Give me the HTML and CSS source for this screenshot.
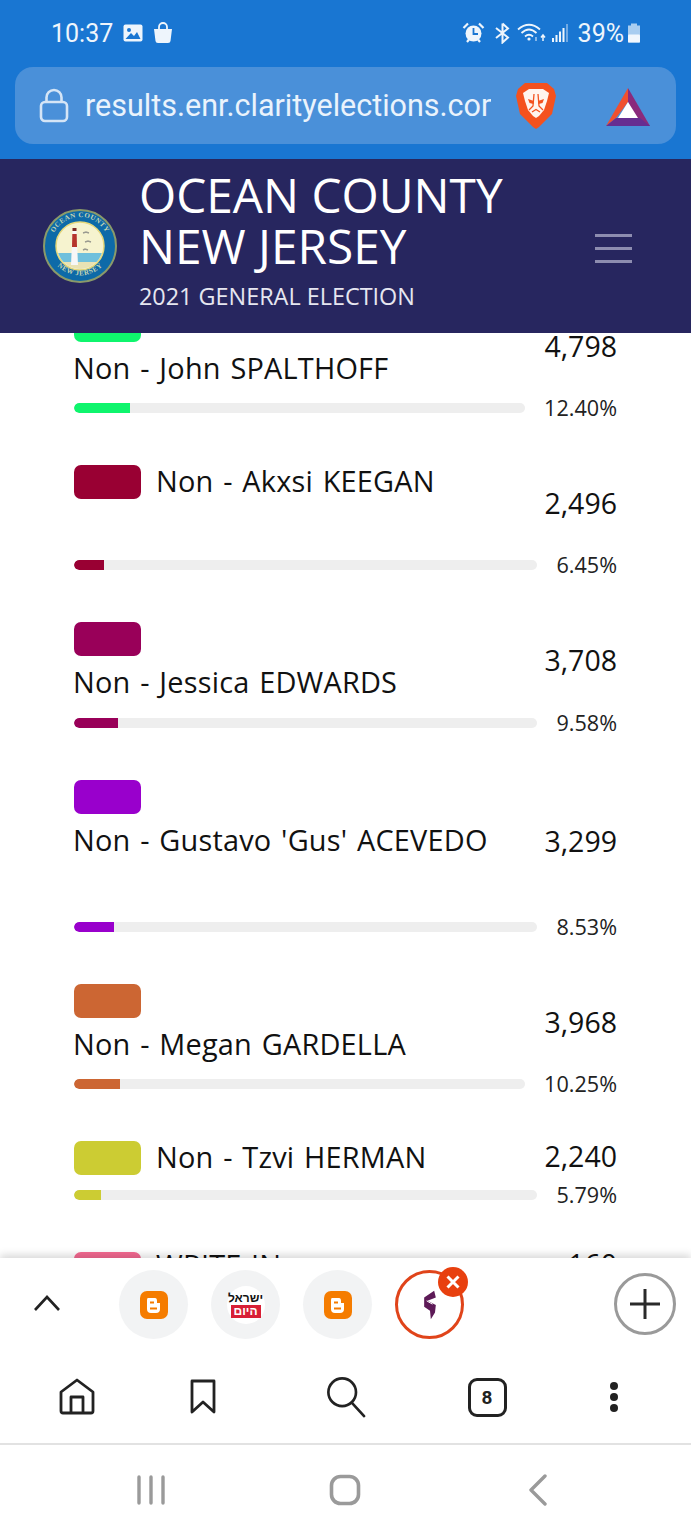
FILE: index.html
```html
<!DOCTYPE html>
<html lang="en">
<head>
<meta charset="utf-8">
<title>Ocean County New Jersey - 2021 General Election</title>
<link rel="stylesheet" href="styles.css">
</head>
<body>
<div class="phone">
  <div class="chrome">
    <div class="status">
      <span class="time">10:37</span>
      <svg class="st-icon" width="20" height="18" viewBox="0 0 20 18"><rect x="0.5" y="0.5" width="19" height="17" rx="2" fill="#eef5fc"/><circle cx="6" cy="6" r="2" fill="#1976d2"/><path d="M2.500 15 L8 9 L11 12 L14 8 L17.500 15 Z" fill="#1976d2"/></svg>
      <svg class="st-icon bag" width="20" height="22" viewBox="0 0 20 22"><path d="M6 8 V5 a4 4 0 0 1 8 0 V8" fill="none" stroke="#eef5fc" stroke-width="1.800"/><path d="M1 7 H19 L17.500 19 Q17.300 21 15 21 H5 Q2.700 21 2.500 19 Z" fill="#eef5fc"/></svg>
      <span class="st-right">
        <svg width="23" height="22" viewBox="0 0 23 22"><path d="M1.500 6 L6 1.500 M21.500 6 L17 1.500 M5 20 L7 17.500 M18 20 L16 17.500" stroke="#eef5fc" stroke-width="2.200" fill="none"/><circle cx="11.500" cy="11.500" r="8" fill="#eef5fc"/><path d="M11.500 6 V12 H16" stroke="#1976d2" stroke-width="1.800" fill="none"/></svg>
        <svg class="bt" width="19" height="22" viewBox="0 0 19 22"><path d="M9.500 1.500 V20.500 L15 15.500 L3 6 M9.500 1.500 L15 6.500 L3 16" stroke="#eef5fc" stroke-width="2" fill="none"/></svg>
        <svg class="wifi" width="31" height="22" viewBox="0 0 31 22"><path d="M1 7.500 Q12 -2 23 7.500 M4.500 11 Q12 4 19.500 11 M8 14.500 Q12 11 16 14.500" stroke="#eef5fc" stroke-width="1.800" fill="none"/><circle cx="12" cy="17" r="1.600" fill="#eef5fc"/><path d="M26 19 V13.500 M24 15.500 L26 13 L28 15.500" stroke="#eef5fc" stroke-width="1.500" fill="none"/><path d="M19 15 V19" stroke="#a9cdf0" stroke-width="1.500"/></svg>
        <svg class="sig" width="16" height="20" viewBox="0 0 16 20"><path d="M1 19 V15 M4.500 19 V12 M8 19 V8.500 M11.500 19 V5" stroke="#eef5fc" stroke-width="2"/><path d="M15 19 V1" stroke="#8fbdea" stroke-width="1.500"/></svg>
        <span class="pct-batt">39%</span>
        <svg class="batt" width="14" height="20" viewBox="0 0 14 20"><path d="M4 0.500 H10 V2.500 H13 V19.500 H1 V2.500 H4 Z" fill="#a9cdf0"/><rect x="1" y="11.500" width="12" height="8" rx="1" fill="#f2f7fd"/></svg>
      </span>
    </div>
    <div class="urlbar">
      <svg class="lock" width="30" height="35" viewBox="0 0 30 35"><rect x="2" y="14" width="26" height="19" rx="4" fill="none" stroke="#d5e5f6" stroke-width="2.600"/><path d="M7.500 14 V9.500 a7.500 7.500 0 0 1 15 0 V14" fill="none" stroke="#d5e5f6" stroke-width="2.600"/></svg>
      <span class="url">results.enr.clarityelections.com</span>
      <svg class="brave" width="42" height="48" viewBox="0 0 42 48">
        <path d="M10 1 H32 L39 7 L41 14 L37 32 L24 45 L21 47 L18 45 L5 32 L1 14 L3 7 Z" fill="#f4511e"/>
        <path d="M8 11 L14 7 H28 L34 11 L32 19 L29 28 L24 34 L21 36 L18 34 L13 28 L10 19 Z" fill="#fff4ee"/>
        <path d="M13 17 L19 19 L18.500 22 L14.500 21 Z M29 17 L23 19 L23.500 22 L27.500 21 Z" fill="#f4511e"/>
        <path d="M19 12 L18 24 L14 28 M23 12 L24 24 L28 28 M17 30 L21 27.500 L25 30" fill="none" stroke="#f4511e" stroke-width="1.300"/>
      </svg>
      <svg class="bat" width="44" height="38" viewBox="0 0 44 38"><path d="M22 0 L44 38 H34 L22 14 Z" fill="#8a2a7c"/><path d="M22 0 L0 38 L10 30 L22 14 Z" fill="#f0502f"/><path d="M0 38 L10 30 H34 L44 38 Z" fill="#662d91"/><path d="M22 14 L32 30 H12 Z" fill="#fff"/></svg>
    </div>
  </div>

  <header class="site-head">
    <svg class="seal" width="74" height="74" viewBox="0 0 74 74">
      <defs><clipPath id="sealInner"><circle cx="37" cy="37" r="23"/></clipPath></defs>
      <circle cx="37" cy="37" r="36" fill="#0d6aa8" stroke="#8a9a6a" stroke-width="2"/>
      <circle cx="37" cy="37" r="24" fill="#f6f3cf" stroke="#e6d87a" stroke-width="1.500"/>
      <g clip-path="url(#sealInner)">
        <rect x="10" y="44" width="54" height="9" fill="#6fc0dc"/>
        <rect x="10" y="53" width="54" height="8" fill="#e9e2b4"/>
      </g>
      <path d="M28 56 L29.500 22 H33.500 L35 56 Z" fill="#f7f7f7"/>
      <path d="M29.300 25 H33.700 L34 38 H29 Z" fill="#b5342c"/>
      <rect x="29.500" y="19" width="4" height="3" fill="#7d2a25"/>
      <path d="M40 24 l3 -1 l3 1 M42 33 l3 -1 l3 1 M40 41 l2 -1 l3 1" fill="none" stroke="#9a9a90" stroke-width="1.400"/>
      <path id="arcTop" d="M8 37 A29 29 0 0 1 66 37" fill="none"/>
      <path id="arcBot" d="M6.500 44 A32 32 0 0 0 67.500 44" fill="none"/>
      <text class="seal-text"><textPath href="#arcTop" startOffset="50%" text-anchor="middle">OCEAN COUNTY</textPath></text>
      <text class="seal-text"><textPath href="#arcBot" startOffset="50%" text-anchor="middle">NEW JERSEY</textPath></text>
    </svg>
    <div class="titles">
      <h1 class="title">OCEAN COUNTY<br>NEW JERSEY</h1>
      <p class="subtitle">2021 GENERAL ELECTION</p>
    </div>
    <div class="burger"><i></i><i></i><i></i></div>
  </header>

  <main class="results">
    <div class="list">
      <section class="row">
        <div class="head">
          <div class="cand"><span class="swatch c-green"></span><span class="name">Non - John SPALTHOFF</span></div>
          <span class="value">4,798</span>
        </div>
        <div class="barline"><div class="track"><div class="fill c-green" style="width:12.4%"></div></div><span class="pct">12.40%</span></div>
      </section>
      <section class="row">
        <div class="head">
          <div class="cand inline"><span class="swatch c-crimson"></span><span class="name">Non - Akxsi KEEGAN</span></div>
          <span class="value">2,496</span>
        </div>
        <div class="barline"><div class="track"><div class="fill c-crimson" style="width:6.45%"></div></div><span class="pct">6.45%</span></div>
      </section>
      <section class="row">
        <div class="head head-96">
          <div class="cand"><span class="swatch c-berry"></span><span class="name">Non - Jessica EDWARDS</span></div>
          <span class="value">3,708</span>
        </div>
        <div class="barline"><div class="track"><div class="fill c-berry" style="width:9.58%"></div></div><span class="pct">9.58%</span></div>
      </section>
      <section class="row">
        <div class="head head-tall">
          <div class="cand"><span class="swatch c-purple"></span><span class="name">Non - Gustavo 'Gus' ACEVEDO</span></div>
          <span class="value">3,299</span>
        </div>
        <div class="barline"><div class="track"><div class="fill c-purple" style="width:8.53%"></div></div><span class="pct">8.53%</span></div>
      </section>
      <section class="row">
        <div class="head">
          <div class="cand"><span class="swatch c-orange"></span><span class="name">Non - Megan GARDELLA</span></div>
          <span class="value">3,968</span>
        </div>
        <div class="barline"><div class="track"><div class="fill c-orange" style="width:10.25%"></div></div><span class="pct">10.25%</span></div>
      </section>
      <section class="row">
        <div class="head head-short">
          <div class="cand inline"><span class="swatch c-olive"></span><span class="name">Non - Tzvi HERMAN</span></div>
          <span class="value">2,240</span>
        </div>
        <div class="barline"><div class="track"><div class="fill c-olive" style="width:5.79%"></div></div><span class="pct">5.79%</span></div>
      </section>
      <section class="row">
        <div class="head head-short head-last">
          <div class="cand inline"><span class="swatch c-pink"></span><span class="name">WRITE-IN</span></div>
          <span class="value">160</span>
        </div>
      </section>
    </div>
  </main>

  <footer class="browser">
    <div class="tabs">
      <svg class="tabs-up" width="30" height="18" viewBox="0 0 30 18"><path d="M3 16 L15 3 L27 16" fill="none" stroke="#222" stroke-width="2.600"/></svg>
      <div class="tab-row">
        <span class="tab"><svg width="30" height="30" viewBox="0 0 30 30"><use href="#blogger"/></svg></span>
        <span class="tab"><span class="hayom"><b class="h-top">ישראל</b><b class="h-bot">היום</b></span></span>
        <span class="tab"><svg width="30" height="30" viewBox="0 0 30 30"><use href="#blogger"/></svg></span>
        <span class="tab tab-active">
          <svg width="18" height="30" viewBox="0 0 20 36"><path d="M15 1 L17 9 L7 13 L17 18 L16 27 L11 35 L10 25 L3 20 L3 9 Z" fill="#5d1a57"/><path d="M6 13 L13 17" stroke="#fff" stroke-width="1.200"/></svg>
          <span class="tab-close"><svg width="16" height="16" viewBox="0 0 16 16"><path d="M2.500 2.500 L13.500 13.500 M13.500 2.500 L2.500 13.500" stroke="#fff" stroke-width="3"/></svg></span>
        </span>
      </div>
      <span class="tab-add"><svg width="34" height="34" viewBox="0 0 34 34"><path d="M17 2 V32 M2 17 H32" stroke="#2a2a2a" stroke-width="3"/></svg></span>
    </div>
    <nav class="nav">
      <svg width="38" height="38" viewBox="0 0 38 38"><path d="M19 2 L35 14 V33 Q35 35 33 35 H5 Q3 35 3 33 V14 Z M13 35 V19 H25 V35" fill="none" stroke="#222" stroke-width="2.800" stroke-linejoin="round"/></svg>
      <svg width="28" height="36" viewBox="0 0 28 36"><path d="M3 2 H25 V33 L14 23 L3 33 Z" fill="none" stroke="#222" stroke-width="2.800" stroke-linejoin="round"/></svg>
      <svg width="40" height="42" viewBox="0 0 42 44"><circle cx="17" cy="17" r="14.500" fill="none" stroke="#222" stroke-width="2.800"/><path d="M27 28 L40 42" stroke="#222" stroke-width="2.800" stroke-linecap="round"/></svg>
      <span class="tab-count">8</span>
      <svg width="12" height="32" viewBox="0 0 12 32"><circle cx="6" cy="5" r="4" fill="#222"/><circle cx="6" cy="16" r="4" fill="#222"/><circle cx="6" cy="27" r="4" fill="#222"/></svg>
    </nav>
    <div class="sysnav">
      <svg width="30" height="30" viewBox="0 0 30 30"><path d="M3 2 V28 M15 2 V28 M27 2 V28" stroke="#9a9a9a" stroke-width="3.400" stroke-linecap="round"/></svg>
      <svg width="32" height="32" viewBox="0 0 32 32"><rect x="2.500" y="2.500" width="27" height="27" rx="9" fill="none" stroke="#9a9a9a" stroke-width="3.600"/></svg>
      <svg width="20" height="32" viewBox="0 0 20 32"><path d="M17 2 L3 16 L17 30" fill="none" stroke="#9a9a9a" stroke-width="3.400" stroke-linecap="round" stroke-linejoin="round"/></svg>
    </div>
  </footer>
</div>
<svg class="defs" width="0" height="0">
  <symbol id="blogger" viewBox="0 0 30 30">
    <rect x="1" y="1" width="28" height="28" rx="7" fill="#f57c00"/>
    <path d="M9 8 H16 Q18 8 18 11 V13 H21 V19 Q21 23 17 23 H12 Q8 23 8 19 V10 Q8 8 9 8 Z" fill="#fff"/>
    <path d="M11 12.500 H15 M11 18.500 H18" stroke="#f57c00" stroke-width="2"/>
  </symbol>
</svg>
</body>
</html>
```

FILE: styles.css
```css
* { box-sizing: border-box; }
html, body { margin: 0; padding: 0; background: #fff; }
.phone {
  width: 691px;
  height: 1536px;
  display: flex;
  flex-direction: column;
  overflow: hidden;
  font-family: "Open Sans", "Noto Sans", sans-serif;
}
.defs { display: block; height: 0; }

/* browser chrome */
.chrome { background: #1976d2; height: 159px; padding: 0 15px; flex: none; }
.status {
  height: 67px;
  display: flex;
  align-items: center;
  padding: 0 36px 1px 36px;
  color: #eef5fc;
  font-family: Roboto, sans-serif;
}
.time { font-size: 25px; margin-right: 10px; }
.st-icon { margin-right: 10px; }
.st-right { margin-left: auto; display: flex; align-items: center; margin-right: -1px; }
.bt { margin-left: 8px; }
.wifi { margin-left: 5px; }
.sig { margin-left: 4px; }
.pct-batt { font-size: 25px; margin-left: 10px; }
.batt { margin-left: 3px; }
.urlbar {
  height: 77px;
  background: #4a90d9;
  border-radius: 18px;
  display: flex;
  align-items: center;
  padding-left: 24px;
}
.lock { flex: none; }
.url {
  width: 406px;
  margin-left: 16px;
  font-family: Roboto, sans-serif;
  font-size: 30.500px;
  color: #eaf3fc;
  white-space: nowrap;
  overflow: hidden;
  flex: none;
}
.brave { margin-left: 24px; flex: none; }
.bat { margin-left: 49px; flex: none; margin-top: 2px; }

/* site header */
.site-head {
  height: 174px;
  flex: none;
  background: #27265f;
  display: flex;
  align-items: center;
  padding: 0 59px 0 43px;
  color: #fff;
}
.seal { flex: none; }
.seal-text { font-family: "Liberation Serif", serif; font-size: 7px; font-weight: 700; fill: #c9d8b4; letter-spacing: 0.500px; }
.titles { margin-left: 23px; flex: 1; margin-top: -12px; }
.title { margin: 0; font-size: 47.800px; line-height: 51px; font-weight: 400; margin-left: -1px; }
.subtitle { margin: 10px 0 0; font-size: 23.400px; line-height: 30px; color: #e6e6f0; margin-left: -1px; }
.burger { display: flex; flex-direction: column; gap: 10px; margin-top: 4px; }
.burger i { display: block; width: 37px; height: 3px; background: #8d8db0; }

/* result list */
.results { flex: 1; min-height: 0; overflow: hidden; background: #fff; }
.list { margin-top: -25px; padding: 0 74px; }
.row { margin-bottom: 52px; }
.head { display: flex; justify-content: space-between; align-items: flex-start; height: 95px; }
.head-96 { height: 96px; }
.head-tall { height: 142px; }
.head-short { height: 49px; }
.cand.inline { display: flex; gap: 15px; }
.swatch { display: block; width: 67px; height: 34px; border-radius: 7px; flex: none; }
.name {
  display: block;
  font-size: 28.900px;
  line-height: 34px;
  margin-top: 9px;
  margin-left: -1px;
  color: #111;
  white-space: nowrap;
  letter-spacing: 0.200px;
  word-spacing: 2px;
}
.inline .name { margin-top: -1px; margin-left: 0; }
.value { font-size: 28.500px; line-height: 30px; margin-top: 23px; color: #111; }
.head-tall .value { margin-top: 46px; }
.head-short .value { margin-top: 0; }
.head-last .name { margin-top: -4px; }
.head-last .value { margin-top: -3px; }
.barline { display: flex; align-items: center; gap: 19px; height: 10px; }
.track { flex: 1; height: 10px; border-radius: 5px; background: #eee; overflow: hidden; }
.fill { height: 100%; border-radius: 5px 0 0 5px; }
.pct { font-size: 21.600px; line-height: 10px; color: #222; }
.c-green { background: #0ff56d; }
.c-crimson { background: #990033; }
.c-berry { background: #990059; }
.c-purple { background: #9900cc; }
.c-orange { background: #cc6633; }
.c-olive { background: #cccc33; }
.c-pink { background: #f56a92; }

/* bottom toolbars */
.browser {
  flex: none;
  height: 278px;
  background: #fff;
  position: relative;
  box-shadow: 0 -3px 8px rgba(0, 0, 0, 0.16);
}
.tabs { height: 93px; display: flex; align-items: flex-start; padding: 12px 15px 0 32px; }
.tabs-up { margin-top: 24px; flex: none; }
.tab-row { display: flex; gap: 23px; margin-left: 57px; }
.tab {
  width: 69px;
  height: 69px;
  border-radius: 50%;
  background: #f2f3f4;
  display: flex;
  align-items: center;
  justify-content: center;
  position: relative;
}
.tab-active { background: #fff; border: 3px solid #e0441a; }
.tab-close {
  position: absolute;
  top: -6px;
  right: -7px;
  width: 30px;
  height: 30px;
  border-radius: 50%;
  background: #e8400f;
  display: flex;
  align-items: center;
  justify-content: center;
}
.hayom {
  width: 38px;
  height: 38px;
  background: #fff;
  border-radius: 50%;
  display: flex;
  flex-direction: column;
  align-items: center;
  justify-content: center;
  font-family: "Liberation Sans", sans-serif;
  direction: rtl;
}
.h-top { font-size: 12px; line-height: 13px; color: #111; }
.h-bot { font-size: 12px; line-height: 13px; color: #fff; background: #d81f36; padding: 0 3px; }
.tab-add {
  margin-left: auto;
  width: 62px;
  height: 62px;
  margin-top: 3px;
  border: 3px solid #9a9a9a;
  border-radius: 50%;
  display: flex;
  align-items: center;
  justify-content: center;
}
.nav {
  height: 92px;
  display: grid;
  grid-template-columns: 126px 126px 160px 122px 132px;
  padding: 0 0 0 14px;
  align-items: center;
  justify-items: center;
  border-bottom: 2px solid #e2e2e2;
  box-sizing: content-box;
}
.tab-count {
  width: 39px;
  height: 39px;
  border: 3px solid #222;
  border-radius: 9px;
  display: flex;
  align-items: center;
  justify-content: center;
  font-family: Roboto, sans-serif;
  font-weight: 700;
  font-size: 19px;
  color: #222;
}
.sysnav {
  height: 89px;
  display: grid;
  grid-template-columns: 194px 193px 194px;
  padding: 0 0 0 54px;
  align-items: center;
  justify-items: center;
}
```
